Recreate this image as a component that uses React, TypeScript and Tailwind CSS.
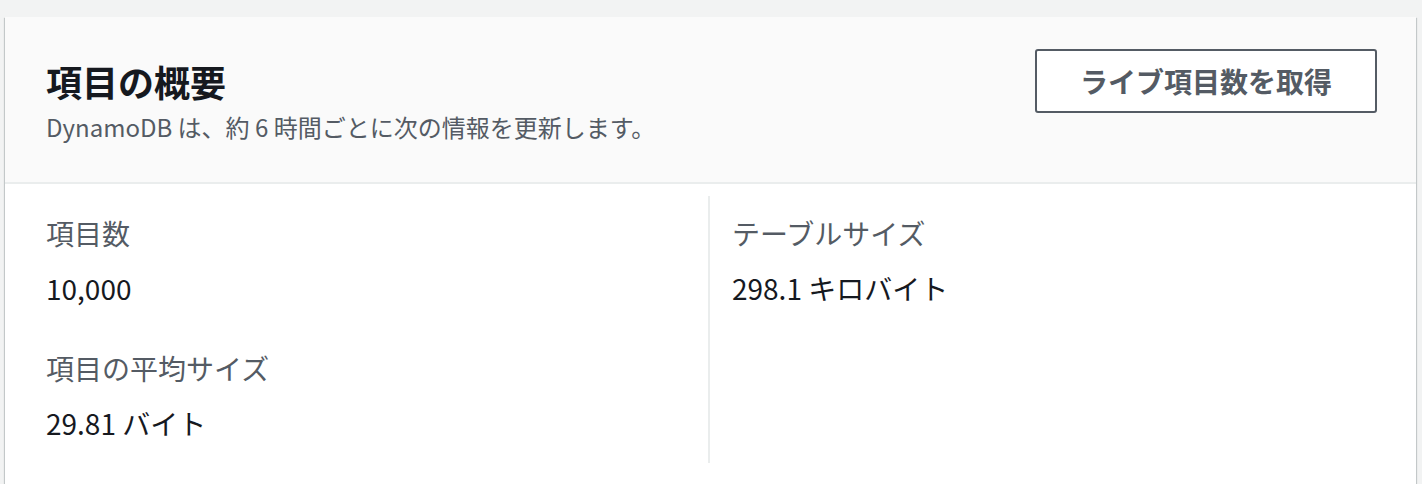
import React from "react";

const FONT = { fontFamily: '"Noto Sans CJK JP", "Noto Sans", sans-serif' };

interface StatProps {
  label: string;
  value: string;
}

function Stat({ label, value }: StatProps) {
  return (
    <div className="flex flex-col gap-[15px]">
      <div className="text-[28px] leading-[40px] text-[#545b64]">{label}</div>
      <div className="text-[28px] leading-[40px] text-[#16191f]">{value}</div>
    </div>
  );
}

export default function App() {
  return (
    <div className="min-h-[484px] bg-[#f2f3f3] pt-[17px] pl-[5px] pr-[6px]" style={FONT}>
      <div className="bg-white shadow-[0_1px_1px_0_rgba(0,28,36,0.3),1px_1px_1px_0_rgba(0,28,36,0.15),-1px_1px_1px_0_rgba(0,28,36,0.15)]">
        {/* Header */}
        <div className="flex items-start justify-between bg-[#fafafa] border-b-2 border-[#eaeded] pl-[41px] pr-[39px] pt-[33px] pb-[39px]">
          <div className="pt-[9px]">
            <h2 className="text-[36px] leading-[44px] font-bold text-[#16191f]">項目の概要</h2>
            <p className="mt-[8px] text-[24px] leading-[32px] text-[#545b64]">
              DynamoDB は、約 6 時間ごとに次の情報を更新します。
            </p>
          </div>
          <button className="h-[64px] -mt-[1px] px-[43px] border-2 border-[#545b64] rounded-[3px] bg-white text-[28px] font-bold text-[#545b64]">
            ライブ項目数を取得
          </button>
        </div>

        {/* Body */}
        <div className="grid grid-cols-[662px_1fr] pl-[41px] pr-[40px] pt-[12px] pb-[40px]">
          <div className="flex flex-col gap-[40px] pt-[17px] pb-[20px]">
            <Stat label="項目数" value="10,000" />
            <Stat label="項目の平均サイズ" value="29.81 バイト" />
          </div>
          <div className="border-l-2 border-[#eaeded] pl-[22px] pt-[17px] pb-[20px]">
            <Stat label="テーブルサイズ" value="298.1 キロバイト" />
          </div>
        </div>
      </div>
    </div>
  );
}
